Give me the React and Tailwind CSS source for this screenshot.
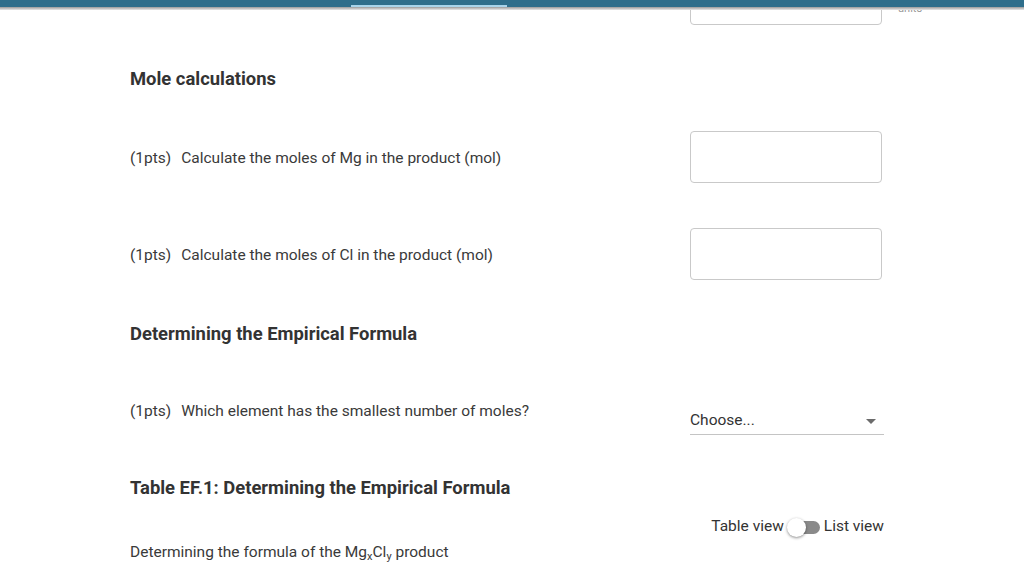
const Question = ({ pts = '(1pts)', children, className = '' }) => (
  <div className={`text-[15.5px] leading-[22px] text-[#3a3a3a] ${className}`}>
    <span className="mr-[10px]">{pts}</span>
    {children}
  </div>
)

const Heading = ({ children, className = '' }) => (
  <h2 className={`pt-[1px] text-[18.4px] leading-[24px] font-bold text-[#333] ${className}`}>{children}</h2>
)

const NumberInput = () => (
  <input
    type="text"
    className="w-[192px] h-[52px] mr-[2px] rounded-[4px] border border-[#c9c9c9] bg-white outline-none"
  />
)

export default function App() {
  return (
    <div className="relative min-h-[563px] bg-white overflow-hidden font-['Roboto',sans-serif]">
      {/* sticky top bar with progress */}
      <div className="absolute top-0 left-0 right-0 z-10">
        <div className="relative h-[7px] bg-[#2e6e8b]">
          <div className="absolute left-[351px] top-[5px] h-[2px] w-[156px] bg-[#a8d4ea]" />
        </div>
        <div className="h-[3px] bg-gradient-to-b from-[#9a9a9a] to-[#e8e8e8]" />
      </div>

      <div className="ml-[130px] w-[754px]">
        {/* previous question, scrolled under the header */}
        <div className="mt-[-27px] h-[52px] flex items-center justify-between relative">
          <Question className="pt-[2px]">Mass of Mg in the product (g)</Question>
          <NumberInput />
          <span className="absolute left-[768px] top-[28px] text-[11px] text-[#999]">units</span>
        </div>

        <Heading className="mt-[41px]">Mole calculations</Heading>

        <div className="mt-[40px] h-[52px] flex items-center justify-between">
          <Question className="pt-[2px]">Calculate the moles of Mg in the product (mol)</Question>
          <NumberInput />
        </div>

        <div className="mt-[45px] h-[52px] flex items-center justify-between">
          <Question className="pt-[2px]">Calculate the moles of Cl in the product (mol)</Question>
          <NumberInput />
        </div>

        <Heading className="mt-[41px]">Determining the Empirical Formula</Heading>

        <div className="mt-[54px] flex items-start justify-between">
          <Question>Which element has the smallest number of moles?</Question>
          <div className="w-[194px] pt-[9px] pb-[3px] border-b border-[#c4c4c4] flex items-center justify-between">
            <span className="text-[15.5px] leading-[22px] text-[#333]">Choose...</span>
            <svg width="10" height="5" viewBox="0 0 10 5" className="mr-[8px] mt-[3px]">
              <path d="M0 0 L10 0 L5 5 Z" fill="#6b6b6b" />
            </svg>
          </div>
        </div>

        <Heading className="mt-[40px]">Table EF.1: Determining the Empirical Formula</Heading>

        <div className="mt-[15px] flex justify-end items-center h-[24px] text-[15.5px] text-[#333]">
          <span>Table view</span>
          <div className="relative ml-[3px] mr-[4px] w-[33px] h-[20px] flex items-center">
            <div className="absolute left-[8px] right-0 h-[13px] rounded-full bg-[#8a8a8a]" />
            <div className="absolute left-0 w-[19px] h-[19px] rounded-full bg-white shadow-[0_1px_3px_rgba(0,0,0,0.45)]" />
          </div>
          <span>List view</span>
        </div>

        <p className="mt-[3px] text-[15.5px] leading-[20px] text-[#3a3a3a]">
          Determining the formula of the Mg<sub className="text-[11px]">x</sub>Cl<sub className="text-[11px]">y</sub> product
        </p>
      </div>
    </div>
  )
}
